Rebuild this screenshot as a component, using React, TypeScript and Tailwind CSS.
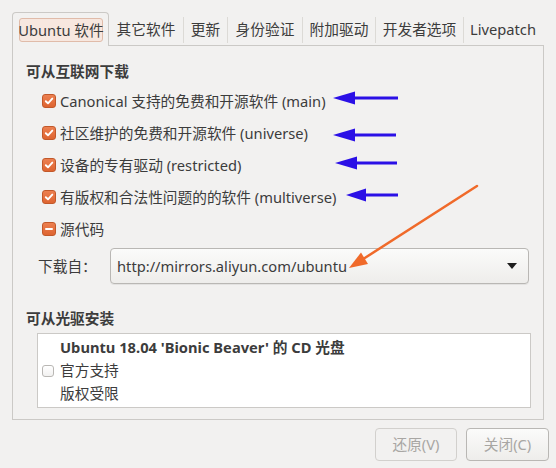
import React from "react";

const FONT = { fontFamily: '"Noto Sans", "Noto Sans CJK SC", sans-serif' };

function CheckedBox() {
  return (
    <span className="flex h-[14px] w-[14px] items-center justify-center rounded-[3px] border border-[#c2582a] bg-gradient-to-b from-[#ec8050] to-[#de6430]">
      <svg width="10" height="10" viewBox="0 0 10 10">
        <path d="M1.8 5.2 L4 7.3 L8.3 2.6" fill="none" stroke="#ffffff" strokeWidth="1.9" strokeLinecap="round" strokeLinejoin="round" />
      </svg>
    </span>
  );
}

function MixedBox() {
  return (
    <span className="flex h-[14px] w-[14px] items-center justify-center rounded-[3px] border border-[#c2582a] bg-gradient-to-b from-[#ec8050] to-[#de6430]">
      <span className="h-[2px] w-[8px] rounded-[1px] bg-white" />
    </span>
  );
}

function Row({ children, mixed }: { children: React.ReactNode; mixed?: boolean }) {
  return (
    <div className="flex h-[32px] items-center pl-[16px]">
      {mixed ? <MixedBox /> : <CheckedBox />}
      <span className="ml-[4px] whitespace-nowrap">{children}</span>
    </div>
  );
}

function Tab({ label, w, sep }: { label: string; w: string; sep: boolean }) {
  return (
    <div className={`flex h-[33px] items-center ${w}`}>
      <span className="flex-1 whitespace-nowrap text-center">{label}</span>
      {sep && <span className="h-[26px] w-px bg-[#dcdad6]" />}
    </div>
  );
}

export default function App() {
  return (
    <div className="relative h-[468px] w-[556px] overflow-hidden bg-[#f2f1f0] text-[14.7px] text-[#3c3c3c]" style={FONT}>
      <div className="ml-[12px] w-[532px] pt-[12px]">
        {/* tabs */}
        <div className="relative z-10 -mb-px flex h-[34px] items-end">
          <div className="flex h-[34px] w-[97px] items-center rounded-t-[4px] border border-b-0 border-[#cbc9c6] bg-[#f2f1f0] pl-[6px] pr-[5px] pt-px">
            <span className="flex h-[24px] w-full items-center justify-center whitespace-nowrap rounded-[3px] border border-[#e0bba9] bg-[#f7e7df]">
              Ubuntu 软件
            </span>
          </div>
          <Tab label="其它软件" w="w-[75px]" sep />
          <Tab label="更新" w="w-[44px]" sep />
          <Tab label="身份验证" w="w-[75px]" sep />
          <Tab label="附加驱动" w="w-[73px]" sep />
          <Tab label="开发者选项" w="w-[88px]" sep />
          <Tab label="Livepatch" w="w-[78px]" sep={false} />
        </div>

        {/* panel */}
        <div className="h-[375px] border border-[#cbc9c6] pl-[13px] pr-[12px] pt-[15px]">
          <div className="h-[20px] font-bold leading-[20px]">可从互联网下载</div>
          <div className="mt-[4px]">
            <Row>Canonical 支持的免费和开源软件 (main)</Row>
            <Row>社区维护的免费和开源软件 (universe)</Row>
            <Row>设备的专有驱动 (restricted)</Row>
            <Row>有版权和合法性问题的的软件 (multiverse)</Row>
            <Row mixed>源代码</Row>
          </div>

          <div className="mt-[3px] flex h-[36px] items-center">
            <span className="w-[84px] pl-[12px]">下载自：</span>
            <div className="flex h-[36px] w-[419px] items-center justify-between rounded-[4px] border border-[#b9b7b4] bg-gradient-to-b from-[#fbfbfa] to-[#eeedeb] pl-[6px] pr-[11px] shadow-[0_1px_0_rgba(0,0,0,0.06)]">
              <span className="whitespace-nowrap">http://mirrors.aliyun.com/ubuntu</span>
              <svg width="10" height="6" viewBox="0 0 10 6">
                <path d="M0 0 H10 L5 6 Z" fill="#1e1e1e" />
              </svg>
            </div>
          </div>

          <div className="mt-[24px] h-[20px] font-bold leading-[20px]">可从光驱安装</div>
          <div className="ml-[11px] mt-[5px] flex h-[75px] w-[494px] items-center border border-[#cbc9c6] bg-white pl-[4px]">
            <span className="h-[12px] w-[12px] rounded-[3px] border border-[#b9b7b4] bg-gradient-to-b from-white to-[#f2f1f0]" />
            <div className="ml-[6px] flex flex-col leading-[23px]">
              <span className="font-bold whitespace-nowrap">Ubuntu 18.04 'Bionic Beaver' 的 CD 光盘</span>
              <span>官方支持</span>
              <span>版权受限</span>
            </div>
          </div>
        </div>
      </div>

      {/* footer buttons */}
      <div className="mt-[8px] flex justify-end gap-[9px] pr-[7px]">
        <div className="flex h-[33px] w-[82px] items-center justify-center rounded-[4px] border border-[#d2d0cd] bg-[#f2f1f0] text-[#a8a6a3]">
          还原(V)
        </div>
        <div className="flex h-[33px] w-[83px] items-center justify-center rounded-[4px] border border-[#b9b7b4] bg-gradient-to-b from-[#fbfbfa] to-[#eeedeb] text-[#a8a6a3]">
          关闭(C)
        </div>
      </div>

      {/* annotation arrows */}
      <svg className="pointer-events-none absolute left-0 top-0" width="556" height="468" viewBox="0 0 556 468">
        <g fill="#2b10e6" stroke="#2b10e6">
          <line x1="352" y1="98" x2="398" y2="98" strokeWidth="3" />
          <polygon points="333,98 355,91.5 355,104.5" stroke="none" />
          <line x1="352" y1="135" x2="396" y2="135" strokeWidth="3" />
          <polygon points="333,135 355,128.5 355,141.5" stroke="none" />
          <line x1="354" y1="163" x2="397" y2="163" strokeWidth="3" />
          <polygon points="335,163 357,156.5 357,169.5" stroke="none" />
          <line x1="362" y1="195" x2="398" y2="195" strokeWidth="3" />
          <polygon points="346,195 366,188.5 366,201.5" stroke="none" />
        </g>
        <line x1="477" y1="186" x2="364" y2="258.5" stroke="#f06a2a" strokeWidth="2.5" strokeLinecap="round" />
        <polygon points="349,268 368,264 361,252.5" fill="#f06a2a" />
      </svg>
    </div>
  );
}
